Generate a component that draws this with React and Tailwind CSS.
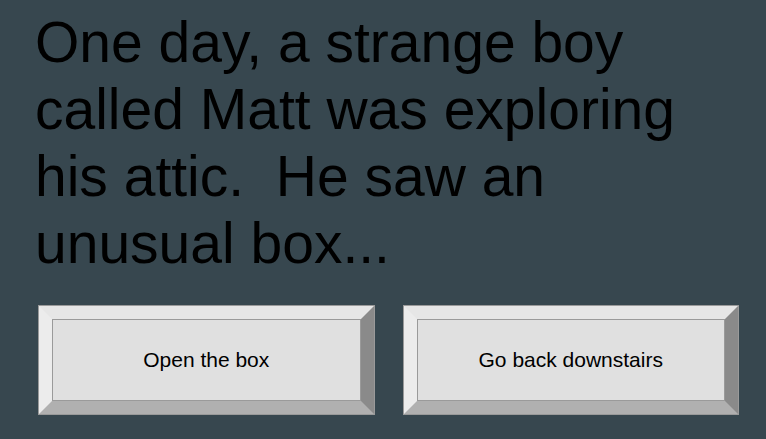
export default function App() {
  const choices = ["Open the box", "Go back downstairs"];

  return (
    <div className="min-h-screen h-[439px] bg-[#37474f] font-['Liberation_Sans',Arial,sans-serif] overflow-hidden">
      <p className="pl-[35px] pt-[9px] w-[720px] text-[57px] leading-[67px] text-black">
        One day, a strange boy called Matt was exploring his attic.&nbsp; He saw an unusual box...
      </p>
      <div className="grid grid-cols-2 gap-[28px] pl-[38px] pr-[27px] mt-[28px]">
        {choices.map((c) => (
          <button
            key={c}
            className="h-[110px] border-[14px] border-t-[#e6e6e6] border-l-[#ececec] border-r-[#8a8a8a] border-b-[#b0b0b0] outline outline-1 outline-[#9a9a9a] -outline-offset-1 bg-[#e0e0e0] shadow-[inset_0_0_0_1px_#9a9a9a] text-[21px] text-black"
          >
            {c}
          </button>
        ))}
      </div>
    </div>
  );
}
